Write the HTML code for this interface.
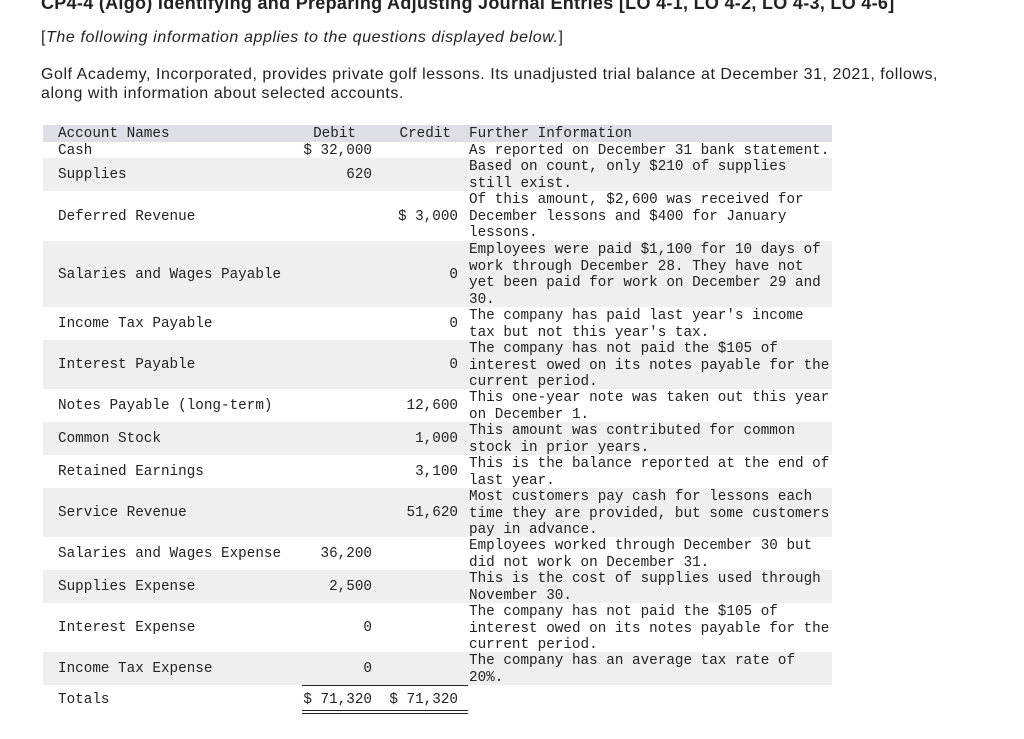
<!DOCTYPE html>
<html><head><meta charset="utf-8"><style>
body{margin:0;width:1024px;height:739px;background:#fff;position:relative;overflow:hidden;font-family:"Liberation Sans",Arial,sans-serif;color:#222}
.t{position:absolute;left:41px;top:-7px;font-weight:bold;font-size:18px;letter-spacing:0.3px;white-space:nowrap;color:#222}
.p{position:absolute;left:41px;font-size:16px;letter-spacing:0.55px;white-space:nowrap}
.r{position:absolute;left:43px;width:789px;font-family:"Liberation Mono",monospace;font-size:14.3px;color:#222}
.g{background:#efefef}
.h{background:#dcdfe5}
.r div{position:absolute;top:1px;bottom:0;display:flex;align-items:center;white-space:pre}
.n{left:15px}
.d{right:460px}
.c{right:374px}
.i{left:426px;line-height:16.5px;align-items:flex-start!important;padding-top:0}
</style></head><body>
<div class="t">CP4-4 (Algo) Identifying and Preparing Adjusting Journal Entries [LO 4-1, LO 4-2, LO 4-3, LO 4-6]</div>
<div class="p" style="top:29px;letter-spacing:0.6px">[<i>The following information applies to the questions displayed below.</i>]</div>
<div class="p" style="top:66px">Golf Academy, Incorporated, provides private golf lessons. Its unadjusted trial balance at December 31, 2021, follows,</div>
<div class="p" style="top:85px">along with information about selected accounts.</div>

<div class="r h" style="top:125px;height:17px"><div class="n">Account Names</div><div class="d" style="right:476px">Debit</div><div class="c" style="right:381px">Credit</div><div class="i">Further Information</div></div>
<div class="r" style="top:142px;height:16px"><div class="n">Cash</div><div class="d">$ 32,000</div><div class="i">As reported on December 31 bank statement.</div></div>
<div class="r g" style="top:158px;height:33px"><div class="n">Supplies</div><div class="d">620</div><div class="i">Based on count, only $210 of supplies
still exist.</div></div>
<div class="r" style="top:191px;height:50px"><div class="n">Deferred Revenue</div><div class="c">$ 3,000</div><div class="i">Of this amount, $2,600 was received for
December lessons and $400 for January
lessons.</div></div>
<div class="r g" style="top:241px;height:66px"><div class="n">Salaries and Wages Payable</div><div class="c">0</div><div class="i">Employees were paid $1,100 for 10 days of
work through December 28. They have not
yet been paid for work on December 29 and
30.</div></div>
<div class="r" style="top:307px;height:33px"><div class="n">Income Tax Payable</div><div class="c">0</div><div class="i">The company has paid last year's income
tax but not this year's tax.</div></div>
<div class="r g" style="top:340px;height:49px"><div class="n">Interest Payable</div><div class="c">0</div><div class="i">The company has not paid the $105 of
interest owed on its notes payable for the
current period.</div></div>
<div class="r" style="top:389px;height:33px"><div class="n">Notes Payable (long-term)</div><div class="c">12,600</div><div class="i">This one-year note was taken out this year
on December 1.</div></div>
<div class="r g" style="top:422px;height:33px"><div class="n">Common Stock</div><div class="c">1,000</div><div class="i">This amount was contributed for common
stock in prior years.</div></div>
<div class="r" style="top:455px;height:33px"><div class="n">Retained Earnings</div><div class="c">3,100</div><div class="i">This is the balance reported at the end of
last year.</div></div>
<div class="r g" style="top:488px;height:49px"><div class="n">Service Revenue</div><div class="c">51,620</div><div class="i">Most customers pay cash for lessons each
time they are provided, but some customers
pay in advance.</div></div>
<div class="r" style="top:537px;height:33px"><div class="n">Salaries and Wages Expense</div><div class="d">36,200</div><div class="i">Employees worked through December 30 but
did not work on December 31.</div></div>
<div class="r g" style="top:570px;height:33px"><div class="n">Supplies Expense</div><div class="d">2,500</div><div class="i">This is the cost of supplies used through
November 30.</div></div>
<div class="r" style="top:603px;height:49px"><div class="n">Interest Expense</div><div class="d">0</div><div class="i">The company has not paid the $105 of
interest owed on its notes payable for the
current period.</div></div>
<div class="r g" style="top:652px;height:33px"><div class="n">Income Tax Expense</div><div class="d">0</div><div class="i">The company has an average tax rate of
20%.</div></div>
<div style="position:absolute;left:302px;top:685px;width:166px;border-top:1px solid #222"></div>
<div class="r" style="top:686px;height:26px;background:transparent"><div class="n">Totals</div><div class="d">$ 71,320</div><div class="c">$ 71,320</div></div>
<div style="position:absolute;left:302px;top:710px;width:166px;height:2px;border-top:1px solid #222;border-bottom:1px solid #222"></div>
</body></html>
